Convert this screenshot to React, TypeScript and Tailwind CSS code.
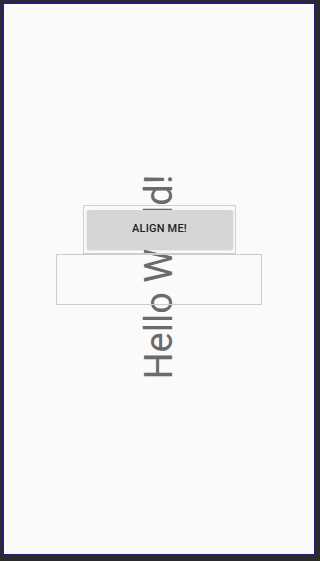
const App = () => {
  return (
    <div className="h-[561px] w-[320px] bg-[#2b2b2b] pl-[2px] pt-[2px] font-['Roboto',sans-serif]">
      <div className="relative h-[554px] w-[314px] border-2 border-[#241f6e] bg-[#fafafa]">
        {/* Rotated label, sits behind the button */}
        <div className="absolute left-[155px] top-[273px] -translate-x-1/2 -translate-y-1/2 -rotate-90 whitespace-nowrap text-[38px] leading-none text-[#6b6b6b]">
          Hello World!
        </div>

        <div className="relative z-10 flex flex-col items-center pt-[201px]">
          {/* Button wrapper */}
          <div className="ml-[1px] flex h-[49px] w-[153px] items-center justify-center border border-[#cfcfcf]">
            <button className="h-[39px] w-[146px] rounded-[2px] bg-[#d6d6d6] text-[11px] font-medium tracking-[0.2px] text-[#222] shadow-[0_1px_2px_rgba(0,0,0,0.2)]">
              ALIGN ME!
            </button>
          </div>
          {/* Empty box */}
          <div className="h-[51px] w-[206px] border border-[#cccccc]" />
        </div>
      </div>
    </div>
  );
};

export default App;
